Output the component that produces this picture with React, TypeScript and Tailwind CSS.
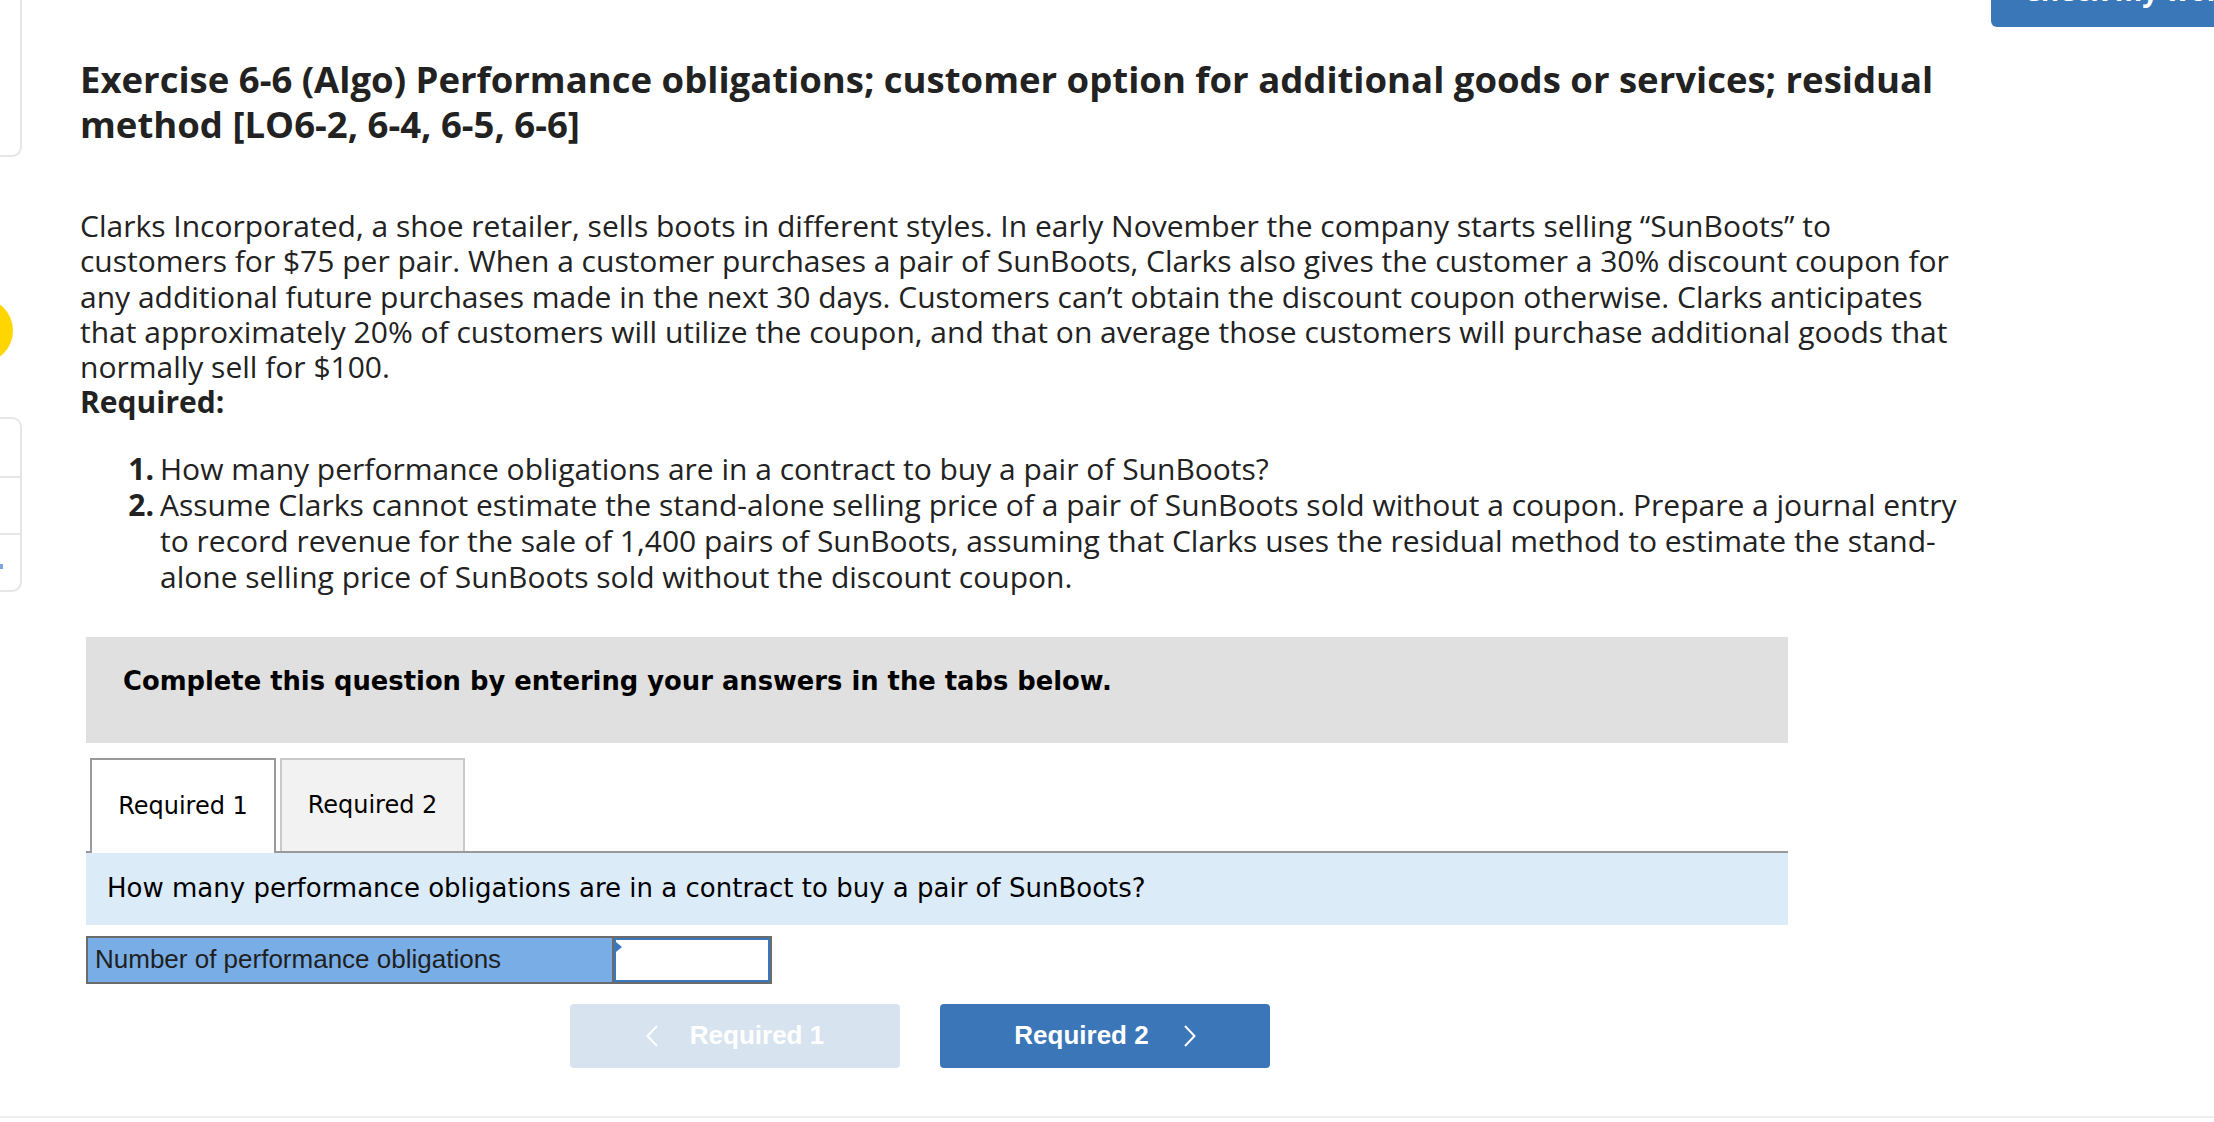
import React from 'react'

function Chevron({ dir }: { dir: 'left' | 'right' }) {
  return (
    <svg width="12" height="22" viewBox="0 0 12 22" fill="none">
      <polyline
        points={dir === 'left' ? '11,1 1.5,11 11,21' : '1,1 10.5,11 1,21'}
        stroke="white"
        strokeWidth="2"
        strokeLinejoin="round"
      />
    </svg>
  )
}

export default function App() {
  return (
    <div className="relative h-[1122px] w-full overflow-hidden bg-white font-['Open_Sans',sans-serif] text-[#222]">
      {/* Check my work (clipped at the top of the viewport) */}
      <div className="absolute right-0 top-0 flex h-[27px] w-[223px] overflow-hidden rounded-bl-[6px] bg-[#3a77b9] pl-[32px]">
        <span className="-mt-[24px] whitespace-nowrap text-[28px] font-bold leading-[28px] text-white">Check my work</span>
      </div>

      <div className="flex">
        {/* left rail, mostly off screen */}
        <div className="flex w-[22px] shrink-0 flex-col">
          <div className="h-[157px] rounded-br-[10px] border-b-2 border-r-2 border-[#e6e6e6]" />
          <div className="-ml-[52px] mt-[141px] h-[65px] w-[65px] shrink-0 rounded-full bg-[#ffd600]" />
          <div className="mt-[54px] flex flex-col rounded-r-[10px] border-2 border-l-0 border-[#e6e6e6]">
            <div className="h-[59px] border-b-2 border-[#e6e6e6]" />
            <div className="h-[57px] border-b-2 border-[#e6e6e6]" />
            <div className="flex h-[55px] items-center">
              <div className="mt-[8px] h-[5px] w-[3px] bg-[#7aa6dc]" />
            </div>
          </div>
        </div>

        {/* main */}
        <main className="ml-[58px] w-[1895px] pt-[57px]">
          <h1 className="text-[36.5px] font-bold leading-[45px] text-[#222]">
            Exercise 6-6 (Algo) Performance obligations; customer option for additional goods or services; residual method [LO6-2, 6-4, 6-5, 6-6]
          </h1>

          <p className="mt-[61px] text-[30px] leading-[35.3px]">
            Clarks Incorporated, a shoe retailer, sells boots in different styles. In early November the company starts selling “SunBoots” to customers for $75 per pair. When a customer purchases a pair of SunBoots, Clarks also gives the customer a 30% discount coupon for any additional future purchases made in the next 30 days. Customers can’t obtain the discount coupon otherwise. Clarks anticipates that approximately 20% of customers will utilize the coupon, and that on average those customers will purchase additional goods that normally sell for $100.
          </p>
          <p className="text-[30px] font-bold leading-[35.3px]">Required:</p>

          <ol className="mt-[31px] flex flex-col text-[30px] leading-[36px]">
            <li className="flex">
              <span className="w-[80px] shrink-0 pr-[6px] text-right font-bold">1.</span>
              <span>How many performance obligations are in a contract to buy a pair of SunBoots?</span>
            </li>
            <li className="flex">
              <span className="w-[80px] shrink-0 pr-[6px] text-right font-bold">2.</span>
              <span>
                Assume Clarks cannot estimate the stand-alone selling price of a pair of SunBoots sold without a coupon. Prepare a journal entry to record revenue for the sale of 1,400 pairs of SunBoots, assuming that Clarks uses the residual method to estimate the stand-alone selling price of SunBoots sold without the discount coupon.
              </span>
            </li>
          </ol>

          <div className="ml-[6px] mt-[42px] w-[1702px]">
            <div className="h-[106px] bg-[#e0e0e0] pl-[37px] pt-[29px] font-['DejaVu_Sans',sans-serif] text-[25.8px] font-bold leading-[30px] text-black">
              Complete this question by entering your answers in the tabs below.
            </div>

            <div className="mt-[15px] flex items-start gap-[4px] border-b-2 border-[#999] pl-[4px] font-['DejaVu_Sans',sans-serif] text-[24px] text-black">
              <div className="-mb-[2px] flex h-[95px] w-[186px] items-center justify-center border-2 border-b-0 border-[#9a9a9a] bg-white">
                Required 1
              </div>
              <div className="flex h-[93px] w-[185px] items-center justify-center border-2 border-b-0 border-[#c9c9c9] bg-[#f2f2f2]">
                Required 2
              </div>
            </div>

            <div className="flex h-[72px] items-center bg-[#dcebf8] pl-[21px] font-['DejaVu_Sans',sans-serif] text-[26px] text-black">
              How many performance obligations are in a contract to buy a pair of SunBoots?
            </div>

            <div className="mt-[11px] flex h-[48px] w-[686px] border-2 border-[#6b6b6b] font-['Liberation_Sans',Arial,sans-serif]">
              <div className="flex w-[524px] items-center bg-[#79ade5] pl-[7px] text-[26px] text-[#1f1f1f]">
                Number of performance obligations
              </div>
              <div className="flex-1 border-l-2 border-[#6b6b6b] bg-white">
                <div className="relative h-full border-2 border-[#3b78bb]">
                  <div className="absolute left-0 top-[2px] h-0 w-0 border-y-[5px] border-l-[6px] border-y-transparent border-l-[#3b78bb]" />
                </div>
              </div>
            </div>

            <div className="mt-[20px] flex gap-[40px] pl-[484px] font-['Liberation_Sans',Arial,sans-serif] text-[26px] font-bold text-white">
              <button className="flex h-[64px] w-[330px] items-center justify-center gap-[32px] rounded-[4px] bg-[#d8e3f0]">
                <Chevron dir="left" />
                <span>Required 1</span>
              </button>
              <button className="flex h-[64px] w-[330px] items-center justify-center gap-[35px] rounded-[4px] bg-[#3a76b8]">
                <span>Required 2</span>
                <Chevron dir="right" />
              </button>
            </div>
          </div>
        </main>
      </div>

      <div className="mt-[48px] h-[2px] w-full bg-[#eeeeee]" />
    </div>
  )
}
